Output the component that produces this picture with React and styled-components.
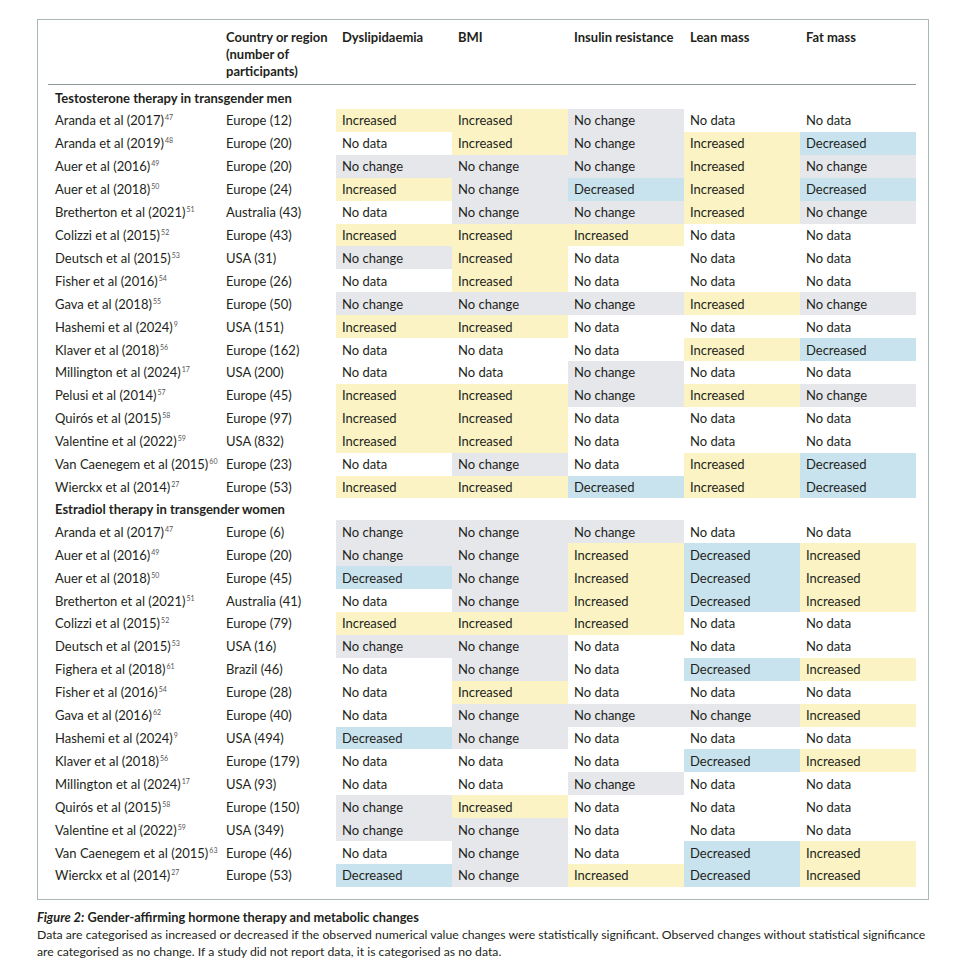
import React from 'react';
import styled, { createGlobalStyle } from 'styled-components';

// ---------------------------------------------------------------------------
// Data
// ---------------------------------------------------------------------------
const COLUMNS = ['Dyslipidaemia', 'BMI', 'Insulin resistance', 'Lean mass', 'Fat mass'];

const I = 'Increased';
const D = 'Decreased';
const C = 'No change';
const N = 'No data';

const SECTIONS = [
  {
    title: 'Testosterone therapy in transgender men',
    rows: [
      ['Aranda et al (2017)', '47', 'Europe (12)', [I, I, C, N, N]],
      ['Aranda et al (2019)', '48', 'Europe (20)', [N, I, C, I, D]],
      ['Auer et al (2016)', '49', 'Europe (20)', [C, C, C, I, C]],
      ['Auer et al (2018)', '50', 'Europe (24)', [I, C, D, I, D]],
      ['Bretherton et al (2021)', '51', 'Australia (43)', [N, C, C, I, C]],
      ['Colizzi et al (2015)', '52', 'Europe (43)', [I, I, I, N, N]],
      ['Deutsch et al (2015)', '53', 'USA (31)', [C, I, N, N, N]],
      ['Fisher et al (2016)', '54', 'Europe (26)', [N, I, N, N, N]],
      ['Gava et al (2018)', '55', 'Europe (50)', [C, C, C, I, C]],
      ['Hashemi et al (2024)', '9', 'USA (151)', [I, I, N, N, N]],
      ['Klaver et al (2018)', '56', 'Europe (162)', [N, N, N, I, D]],
      ['Millington et al (2024)', '17', 'USA (200)', [N, N, C, N, N]],
      ['Pelusi et al (2014)', '57', 'Europe (45)', [I, I, C, I, C]],
      ['Quirós et al (2015)', '58', 'Europe (97)', [I, I, N, N, N]],
      ['Valentine et al (2022)', '59', 'USA (832)', [I, I, N, N, N]],
      ['Van Caenegem et al (2015)', '60', 'Europe (23)', [N, C, N, I, D]],
      ['Wierckx et al (2014)', '27', 'Europe (53)', [I, I, D, I, D]],
    ],
  },
  {
    title: 'Estradiol therapy in transgender women',
    rows: [
      ['Aranda et al (2017)', '47', 'Europe (6)', [C, C, C, N, N]],
      ['Auer et al (2016)', '49', 'Europe (20)', [C, C, I, D, I]],
      ['Auer et al (2018)', '50', 'Europe (45)', [D, C, I, D, I]],
      ['Bretherton et al (2021)', '51', 'Australia (41)', [N, C, I, D, I]],
      ['Colizzi et al (2015)', '52', 'Europe (79)', [I, I, I, N, N]],
      ['Deutsch et al (2015)', '53', 'USA (16)', [C, C, N, N, N]],
      ['Fighera et al (2018)', '61', 'Brazil (46)', [N, C, N, D, I]],
      ['Fisher et al (2016)', '54', 'Europe (28)', [N, I, N, N, N]],
      ['Gava et al (2016)', '62', 'Europe (40)', [N, C, C, C, I]],
      ['Hashemi et al (2024)', '9', 'USA (494)', [D, C, N, N, N]],
      ['Klaver et al (2018)', '56', 'Europe (179)', [N, N, N, D, I]],
      ['Millington et al (2024)', '17', 'USA (93)', [N, N, C, N, N]],
      ['Quirós et al (2015)', '58', 'Europe (150)', [C, I, N, N, N]],
      ['Valentine et al (2022)', '59', 'USA (349)', [C, C, N, N, N]],
      ['Van Caenegem et al (2015)', '63', 'Europe (46)', [N, C, N, D, I]],
      ['Wierckx et al (2014)', '27', 'Europe (53)', [D, C, I, D, I]],
    ],
  },
];

const TONES = {
  [I]: '#fbf3c4',
  [D]: '#c9e3ee',
  [C]: '#e6e7eb',
  [N]: 'transparent',
};

// ---------------------------------------------------------------------------
// Styled components
// ---------------------------------------------------------------------------
const GlobalStyle = createGlobalStyle`
  html, body {
    margin: 0;
    background: #ffffff;
  }
  body {
    font-family: 'Lato', 'Open Sans', sans-serif;
    color: #231f20;
  }
`;

const Page = styled.div`
  padding: 19px 0 0 37px;
  width: 892px;
`;

const Frame = styled.div`
  border: 1px solid #a9bab5;
  padding: 0 11px 12px 10px;
`;

const Table = styled.table`
  width: 868px;
  border-collapse: collapse;
  table-layout: fixed;
  font-size: 13px;
`;

const HeadCell = styled.th`
  text-align: left;
  vertical-align: top;
  font-weight: 700;
  line-height: 17px;
  padding: 9px 6px 4px;
  border-bottom: 1px solid #8e9a98;
  color: #231f20;
`;

const SectionCell = styled.td`
  font-weight: 700;
  height: ${(p) => (p.$first ? '23px' : '22px')};
  padding: ${(p) => (p.$first ? '1px' : '0')} 7px 0;
  line-height: 22px;
`;

const Cell = styled.td`
  height: 22.92px;
  padding: 0 6px;
  line-height: 22px;
  white-space: nowrap;
  background: ${(p) => p.$tone || 'transparent'};
`;

const StudyCell = styled(Cell)`
  padding-left: 7px;
`;

const Ref = styled.sup`
  font-size: 7px;
  line-height: 0;
  vertical-align: 5px;
  margin-left: 1px;
  color: #555;
`;

const Caption = styled.div`
  padding: 9px 0 0;
  font-size: 12.25px;
  line-height: 17px;
`;

const CaptionTitle = styled.div`
  font-size: 12.8px;
  font-weight: 700;

  em {
    font-style: italic;
  }
`;

// ---------------------------------------------------------------------------
// Page
// ---------------------------------------------------------------------------
export default function App() {
  return (
    <>
      <GlobalStyle />
      <Page>
        <Frame>
          <Table>
            <colgroup>
              <col style={{ width: 172 }} />
              <col style={{ width: 116 }} />
              {COLUMNS.map((c) => (
                <col key={c} style={{ width: 116 }} />
              ))}
            </colgroup>
            <thead>
              <tr>
                <HeadCell />
                <HeadCell>Country or region (number of participants)</HeadCell>
                {COLUMNS.map((c) => (
                  <HeadCell key={c}>{c}</HeadCell>
                ))}
              </tr>
            </thead>
            {SECTIONS.map((section, si) => (
              <tbody key={section.title}>
                <tr>
                  <SectionCell colSpan={7} $first={si === 0}>{section.title}</SectionCell>
                </tr>
                {section.rows.map(([study, ref, region, values]) => (
                  <tr key={study + region}>
                    <StudyCell>
                      {study}
                      <Ref>{ref}</Ref>
                    </StudyCell>
                    <Cell>{region}</Cell>
                    {values.map((v, i) => (
                      <Cell key={i} $tone={TONES[v]}>{v}</Cell>
                    ))}
                  </tr>
                ))}
              </tbody>
            ))}
          </Table>
        </Frame>
        <Caption>
          <CaptionTitle>
            <em>Figure 2:</em> Gender-affirming hormone therapy and metabolic changes
          </CaptionTitle>
          Data are categorised as increased or decreased if the observed numerical value changes were
          statistically significant. Observed changes without statistical significance are categorised
          as no change. If a study did not report data, it is categorised as no data.
        </Caption>
      </Page>
    </>
  );
}
